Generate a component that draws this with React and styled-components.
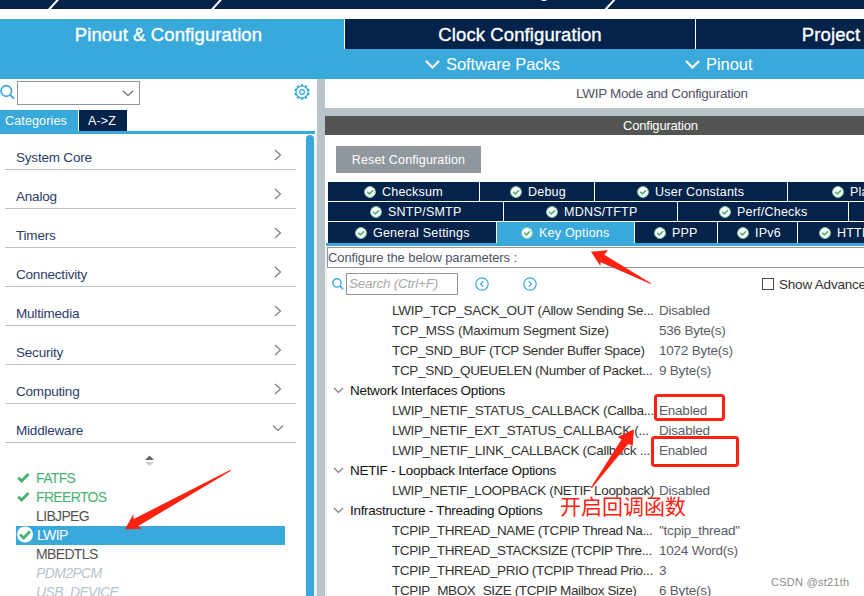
import React from 'react'
import styled, { createGlobalStyle } from 'styled-components'

const NAVY = '#03234b'
const BLUE = '#39a9dc'
const STEEL = '#b8c4ca'
const RED = '#ff2111'

const GlobalStyle = createGlobalStyle`
  * {
    box-sizing: border-box;
  }

  body {
    margin: 0;
    overflow: hidden;
    font-family: "Liberation Sans", "Noto Sans CJK SC", sans-serif;
  }
`

const Window = styled.div`
  position: relative;
  width: 864px;
  height: 596px;
  overflow: hidden;
  display: flex;
  flex-direction: column;
  background: #fff;
  font-size: 13px;
  white-space: nowrap;
`

const Breadcrumb = styled.svg`
  display: block;
  flex: none;
  width: 864px;
  height: 9px;
  background: ${NAVY};
`

const MainTabs = styled.div`
  display: grid;
  grid-template-columns: 344px 350px 270px;
  column-gap: 1px;
  flex: none;
  height: 30px;
  margin-top: 10px;
`

const MainTab = styled.div`
  background: ${ props => props.$active ? BLUE : NAVY };
  color: #fff;
  font-size: 18.5px;
  line-height: 32px;
  letter-spacing: 0.1px;
  text-align: center;
  padding-right: ${ props => props.$active ? '7px' : '0' };
  -webkit-text-stroke: 0.35px #fff;
`

const SubBar = styled.div`
  flex: none;
  height: 30px;
  display: flex;
  align-items: center;
  gap: 125px;
  padding-top: 1px;
  padding-left: 425px;
  background: ${BLUE};
`

const SubItem = styled.div`
  display: flex;
  align-items: center;
  gap: 6px;
  color: #fff;
  font-size: 16.5px;
  letter-spacing: -0.05px;
`

const Body = styled.div`
  flex: 1;
  display: flex;
  min-height: 0;
`

const Sidebar = styled.div`
  flex: none;
  width: 317px;
  display: flex;
  flex-direction: column;
`

const SearchRow = styled.div`
  flex: none;
  height: 31px;
  display: flex;
  align-items: flex-start;
  padding: 2px 7px 0 0;
`

const Combo = styled.div`
  width: 123px;
  height: 24px;
  margin-left: 2px;
  margin-right: auto;
  border: 1px solid #90989e;
  display: flex;
  align-items: center;
  justify-content: flex-end;
  padding-right: 5px;
`

const ListTabs = styled.div`
  flex: none;
  display: flex;
  gap: 1px;
  width: 315px;
  height: 24px;
  border-bottom: 3px solid ${BLUE};
`

const ListTab = styled.div`
  width: ${ props => props.$active ? '78px' : '48px' };
  background: ${ props => props.$active ? BLUE : NAVY };
  color: #fff;
  font-size: 12.5px;
  line-height: 22px;
  letter-spacing: 0.15px;
  padding-left: ${ props => props.$active ? '5px' : '9px' };
`

const ListArea = styled.div`
  flex: 1;
  display: flex;
  min-height: 0;
`

const CategoryList = styled.div`
  width: 291px;
  margin-left: 5px;
  margin-top: -3px;
`

const Category = styled.div`
  height: 39px;
  display: flex;
  align-items: center;
  justify-content: space-between;
  padding: 14px 11px 0 11px;
  border-bottom: 1px solid ${STEEL};
  color: #2c3c69;
  font-size: 13.5px;
  letter-spacing: -0.2px;
`

const CategoryChevron = styled.svg`
  margin-top: -5px;
  margin-right: 1px;
`

const SortHandle = styled.svg`
  display: block;
  margin: 12px 0 3px 139px;
`

const Scrollbar = styled.div`
  width: 11px;
  margin-left: 10px;
  border-right: 3px solid #f0f0f0;

  &::before {
    content: '';
    display: block;
    height: 100%;
    margin-top: 1px;
    border-radius: 4px 4px 0 0;
    background: ${BLUE};
  }
`

const Component = styled.div`
  width: 269px;
  height: 19px;
  margin-left: 11px;
  padding-bottom: 2px;
  display: flex;
  align-items: center;
  font-size: 14px;
  letter-spacing: -0.65px;
  color: ${ props => props.$color };
  background: ${ props => props.$selected ? BLUE : 'transparent' };
  font-style: ${ props => props.$disabled ? 'italic' : 'normal' };
`

const Mark = styled.span`
  width: ${ props => props.$round ? 21 : 20 }px;
  height: 17px;
  display: flex;
  align-items: center;
`

const Splitter = styled.div`
  flex: none;
  width: 8px;
  background: ${STEEL};
`

const Panel = styled.div`
  flex: 1;
  min-width: 0;
  display: flex;
  flex-direction: column;
`

const PanelTitle = styled.div`
  flex: none;
  height: 37px;
  line-height: 29px;
  border-bottom: 8px solid ${STEEL};
  padding-left: 251px;
  color: #525365;
  font-size: 13.5px;
  letter-spacing: -0.29px;
`

const SectionTitle = styled.div`
  flex: none;
  height: 19px;
  line-height: 19px;
  padding-left: 298px;
  background: #525552;
  color: #fff;
  letter-spacing: -0.2px;
`

const ResetButton = styled.button`
  flex: none;
  width: 145px;
  height: 27px;
  margin: 11px 0 9px 11px;
  padding: 0;
  border: none;
  background: #90989e;
  color: #fff;
  font-family: inherit;
  font-size: 12.5px;
  letter-spacing: 0.15px;
`

const TabRows = styled.div`
  flex: none;
  width: 538px;
  margin-left: 1px;
  padding-left: 2px;
  border-bottom: 3px solid ${BLUE};
`

const TabRow = styled.div`
  display: flex;
  gap: 1px;
  height: ${ props => props.$last ? '21px' : '20px' };
  border-bottom: ${ props => props.$last ? 'none' : '1px solid #fff' };
`

const Tab = styled.div`
  flex: none;
  width: ${ props => props.$width }px;
  padding-left: ${ props => props.$inset }px;
  display: flex;
  align-items: center;
  gap: 6px;
  background: ${ props => props.$active ? BLUE : NAVY };
  color: #fff;
  font-size: 12.5px;
  letter-spacing: 0.22px;

  svg {
    flex: none;
  }
`

const Content = styled.div`
  flex: 1;
  min-height: 0;
  border-left: 2px solid #f0f0f0;
`

const Hint = styled.div`
  height: 21px;
  margin-top: 1px;
  line-height: 19px;
  border: 1px solid #90989e;
  border-right: none;
  color: #525365;
  letter-spacing: -0.1px;
`

const FilterRow = styled.div`
  height: 32px;
  display: flex;
  align-items: center;
  padding-left: 5px;

  svg {
    flex: none;
  }
`

const SearchBox = styled.div`
  flex: none;
  width: 112px;
  height: 22px;
  margin: 0 17px 0 2px;
  padding-left: 2px;
  line-height: 20px;
  border: 1px solid #90989e;
  color: #a8a8a8;
  font-size: 13.5px;
  font-style: italic;
  letter-spacing: -0.25px;
`

const StepIcon = styled.svg`
  margin-right: ${ props => props.$gap }px;
`

const Checkbox = styled.span`
  flex: none;
  width: 12px;
  height: 12px;
  margin-right: 5px;
  border: 1px solid #444;
`

const CheckLabel = styled.span`
  color: #333;
  font-size: 13.5px;
  letter-spacing: -0.2px;
`

const Group = styled.div`
  height: 20px;
  display: flex;
  align-items: center;
  gap: 6px;
  padding-left: 6px;
  color: #111;
  font-size: 13.5px;
  letter-spacing: -0.3px;
`

const Param = styled.div`
  height: 20px;
  display: grid;
  grid-template-columns: 267px 1fr;
  align-items: center;
  padding-left: 65px;
  font-size: 13.5px;
`

const ParamName = styled.span`
  color: #333;
  letter-spacing: ${ props => props.$spacing }px;
`

const ParamValue = styled.span`
  color: #5c5c66;
  letter-spacing: -0.22px;
`

const Annotations = styled.svg`
  position: absolute;
  left: 0;
  top: 0;
  pointer-events: none;
`

const Note = styled.div`
  position: absolute;
  left: 560px;
  top: 490px;
  color: ${RED};
  font-family: "Noto Sans CJK SC", sans-serif;
  font-size: 21px;
  line-height: 30px;
`

const Watermark = styled.div`
  position: absolute;
  left: 771px;
  top: 575px;
  color: #8c8c8c;
  font-size: 11px;
  line-height: 15px;
  letter-spacing: 0.25px;
`

const Magnifier = ({ size }) => (
  <svg width={size} height={size} viewBox="0 0 15 15" fill="none" stroke={BLUE} strokeWidth="1.7">
    <circle cx="6.2" cy="6.2" r="5.2" />
    <path d="M10 10 L14 14" strokeWidth="2" />
  </svg>
)

const Down = ({ width, height, color, stroke }) => (
  <svg width={width} height={height} viewBox={`0 0 ${width} ${height}`} fill="none" stroke={color} strokeWidth={stroke}>
    <path d={`M1 1 L${width / 2} ${height - 1.5} L${width - 1} 1`} />
  </svg>
)

const teeth = Array.from({ length: 10 }, (_, i) => i * 36)

const Gear = () => (
  <svg width="16" height="22" viewBox="0 0 16 22" fill="none" stroke={BLUE}>
    <circle cx="8" cy="11" r="6" strokeWidth="1.2" />
    <circle cx="8" cy="11" r="2.4" strokeWidth="1.2" />
    {teeth.map(a => (
      <path key={a} d="M8 5 V3.2" strokeWidth="2.4" transform={`rotate(${a} 8 11)`} />
    ))}
  </svg>
)

const TabCheck = () => (
  <svg width="12" height="12" viewBox="0 0 12 12">
    <circle cx="6" cy="6" r="5.4" fill="#fff" stroke="#8fd0a8" strokeWidth="1" />
    <path d="M3.2 5.8 L5.4 8 L9 4.2" fill="none" stroke="#3fae6a" strokeWidth="1.5" />
  </svg>
)

const TreeCheck = ({ round }) => (
  <svg width={round ? 18 : 14} height="17" viewBox={round ? '-1 0 18 17' : '-1 0 14 17'}>
    {round ? <circle cx="8" cy="8.5" r="8" fill="#fff" /> : null}
    <path
      d={round ? 'M3 8.5 L6.8 12 L13 5.2' : 'M1.2 8.7 L4.6 12 L11.5 5'}
      fill="none" stroke="#45b26f" strokeWidth="2.8"
    />
  </svg>
)

const categories = ['System Core', 'Analog', 'Timers', 'Connectivity', 'Multimedia', 'Security', 'Computing', 'Middleware']

const components = [
  { name: 'FATFS', state: 'enabled' },
  { name: 'FREERTOS', state: 'enabled' },
  { name: 'LIBJPEG' },
  { name: 'LWIP', state: 'selected' },
  { name: 'MBEDTLS' },
  { name: 'PDM2PCM', state: 'disabled' },
  { name: 'USB_DEVICE', state: 'disabled' }
]

const colors = { enabled: '#45b26f', selected: '#fff', disabled: '#b8c4ca' }

// label, width, left inset
const tabRows = [
  [['Checksum', 151, 36], ['Debug', 114, 30], ['User Constants', 192, 42], ['Platform Settings', 150, 44]],
  [['SNTP/SMTP', 175, 42], ['MDNS/TFTP', 173, 42], ['Perf/Checks', 170, 41], ['', 90, 30]],
  [['General Settings', 168, 27], ['Key Options', 137, 24], ['PPP', 82, 19], ['IPv6', 79, 19], ['HTTPD', 110, 21]]
]

// name, value, letter spacing; a row without a value is a group header
const rows = [
  ['LWIP_TCP_SACK_OUT (Allow Sending Se...', 'Disabled', -0.27],
  ['TCP_MSS (Maximum Segment Size)', '536 Byte(s)', -0.2],
  ['TCP_SND_BUF (TCP Sender Buffer Space)', '1072 Byte(s)', -0.36],
  ['TCP_SND_QUEUELEN (Number of Packet...', '9 Byte(s)', -0.32],
  ['Network Interfaces Options'],
  ['LWIP_NETIF_STATUS_CALLBACK (Callba...', 'Enabled', -0.3],
  ['LWIP_NETIF_EXT_STATUS_CALLBACK (...', 'Disabled', -0.34],
  ['LWIP_NETIF_LINK_CALLBACK (Callback ...', 'Enabled', -0.29],
  ['NETIF - Loopback Interface Options'],
  ['LWIP_NETIF_LOOPBACK (NETIF Loopback)', 'Disabled', -0.34],
  ['Infrastructure - Threading Options'],
  ['TCPIP_THREAD_NAME (TCPIP Thread Na...', '"tcpip_thread"', -0.41],
  ['TCPIP_THREAD_STACKSIZE (TCPIP Thre...', '1024 Word(s)', -0.4],
  ['TCPIP_THREAD_PRIO (TCPIP Thread Prio...', '3', -0.4],
  ['TCPIP_MBOX_SIZE (TCPIP Mailbox Size)', '6 Byte(s)', -0.35]
]

const SidebarPane = () => (
  <Sidebar>
    <SearchRow>
      <svg width="15" height="22" viewBox="0 0 15 22" fill="none" stroke={BLUE}>
        <circle cx="6.3" cy="10" r="5.3" strokeWidth="1.7" />
        <path d="M10 13.8 L14 17.6" strokeWidth="2" />
      </svg>
      <Combo><Down width={12} height={7} color="#666" stroke={1.1} /></Combo>
      <Gear />
    </SearchRow>
    <ListTabs>
      <ListTab $active>Categories</ListTab>
      <ListTab>A-&gt;Z</ListTab>
    </ListTabs>
    <ListArea>
      <CategoryList>
        {categories.map(name => (
          <Category key={name}>
            {name}
            <CategoryChevron width="12" height="12" viewBox="0 0 12 12" fill="none" stroke="#777" strokeWidth="1.1">
              <path d={name === 'Middleware' ? 'M1 3.5 L6 8.5 L11 3.5' : 'M3 1 L8.5 6 L3 11'} />
            </CategoryChevron>
          </Category>
        ))}
        <SortHandle width="11" height="11" viewBox="0 0 11 11">
          <path d="M1 5 L5.5 0.5 L10 5 Z" fill="#666" />
          <path d="M1 7 L5.5 11 L10 7 Z" fill="#ccc" />
        </SortHandle>
        {components.map(({ name, state }) => (
          <Component key={name} $selected={state === 'selected'} $disabled={state === 'disabled'} $color={colors[state] || '#525252'}>
            <Mark $round={state === 'selected'}>
              {state === 'enabled' || state === 'selected' ? <TreeCheck round={state === 'selected'} /> : null}
            </Mark>
            {name}
          </Component>
        ))}
      </CategoryList>
      <Scrollbar />
    </ListArea>
  </Sidebar>
)

const ConfigPanel = () => (
  <Panel>
    <PanelTitle>LWIP Mode and Configuration</PanelTitle>
    <SectionTitle>Configuration</SectionTitle>
    <ResetButton>Reset Configuration</ResetButton>
    <TabRows>
      {tabRows.map((tabs, i) => (
        <TabRow key={i} $last={i === 2}>
          {tabs.map(([label, width, inset]) => (
            <Tab key={label} $width={width} $inset={inset} $active={label === 'Key Options'}>
              <TabCheck />
              {label}
            </Tab>
          ))}
        </TabRow>
      ))}
    </TabRows>
    <Content>
      <Hint>Configure the below parameters :</Hint>
      <FilterRow>
        <Magnifier size={12} />
        <SearchBox>Search (Ctrl+F)</SearchBox>
        <StepIcon $gap={34} width="14" height="14" viewBox="0 0 14 14" fill="none" stroke={BLUE} strokeWidth="1.2">
          <circle cx="7" cy="7" r="6.2" />
          <path d="M8.3 4.2 L5.5 7 L8.3 9.8" />
        </StepIcon>
        <StepIcon $gap={225} width="14" height="14" viewBox="0 0 14 14" fill="none" stroke={BLUE} strokeWidth="1.2">
          <circle cx="7" cy="7" r="6.2" />
          <path d="M5.7 4.2 L8.5 7 L5.7 9.8" />
        </StepIcon>
        <Checkbox />
        <CheckLabel>Show Advanced Parameters</CheckLabel>
      </FilterRow>
      {rows.map(([name, value, spacing]) => value ? (
        <Param key={name}>
          <ParamName $spacing={spacing}>{name}</ParamName>
          <ParamValue>{value}</ParamValue>
        </Param>
      ) : (
        <Group key={name}>
          <Down width={11} height={7} color="#777" stroke={1.1} />
          {name}
        </Group>
      ))}
    </Content>
  </Panel>
)

const App = () => (
  <Window>
    <GlobalStyle />
    <Breadcrumb viewBox="0 0 864 9" fill="none" stroke="#fff" strokeWidth="2">
      <path d="M49 9.5 L58.5 -1 M212 9.5 L221.5 -1 M605.5 9.5 L615 -1" />
      <path d="M541 -0.5 Q544 1.2 547 -0.5" strokeWidth="1.2" />
    </Breadcrumb>
    <MainTabs>
      <MainTab $active>Pinout &amp; Configuration</MainTab>
      <MainTab>Clock Configuration</MainTab>
      <MainTab>Project</MainTab>
    </MainTabs>
    <SubBar>
      <SubItem><Down width={15} height={9} color="#fff" stroke={2.2} />Software Packs</SubItem>
      <SubItem><Down width={15} height={9} color="#fff" stroke={2.2} />Pinout</SubItem>
    </SubBar>
    <Body>
      <SidebarPane />
      <Splitter />
      <ConfigPanel />
    </Body>
    <Annotations width="864" height="596" viewBox="0 0 864 596" fill={RED}>
      <path d="M125 529.3 L133.3 514.3 L133.7 519 L230 470 L231 470.7 L138.3 526 L142.3 528.7 Z" />
      <path d="M591 251.7 L608 250.3 L604.3 254.7 L651 283.3 L650.7 284 L600.7 262.3 L600.3 266 Z" />
      <path d="M634 429.3 L632.7 446 L628.3 444 L591.7 488.3 L590.7 487.7 L621.5 439.5 L617.7 436.7 Z" />
      <rect x="655.5" y="395.5" width="68" height="24" rx="2" fill="none" stroke={RED} strokeWidth="3" />
      <rect x="652.5" y="437.5" width="85" height="28" rx="2" fill="none" stroke={RED} strokeWidth="3" />
    </Annotations>
    <Note>开启回调函数</Note>
    <Watermark>CSDN @st21th</Watermark>
  </Window>
)

export default App
